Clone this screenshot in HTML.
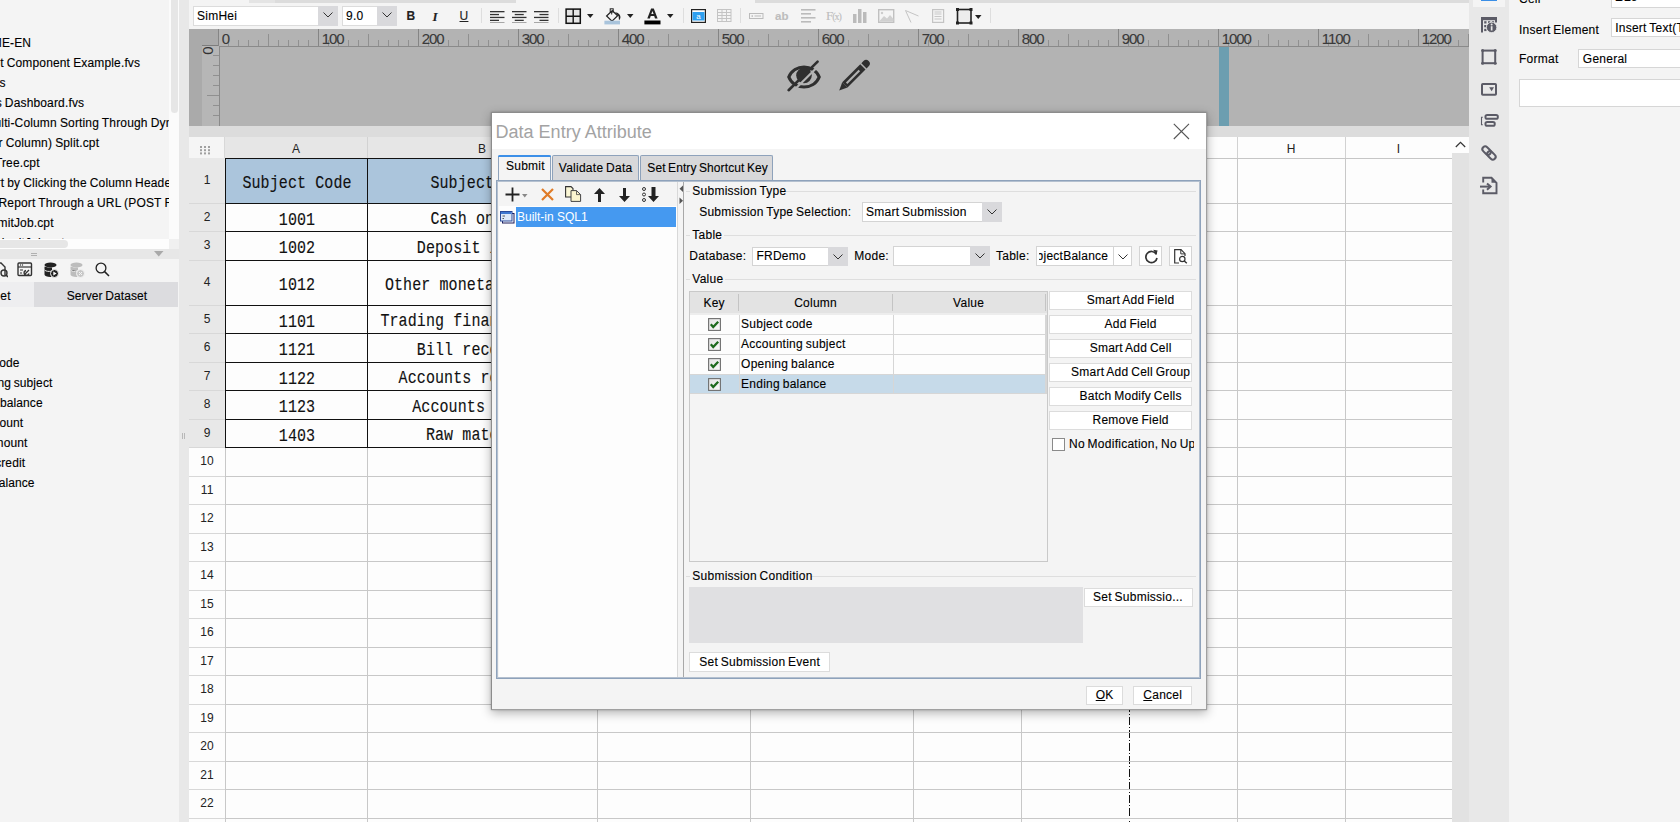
<!DOCTYPE html><html><head><meta charset="utf-8"><style>
html,body{margin:0;padding:0}
body{width:1680px;height:822px;overflow:hidden;position:relative;background:#f4f4f4;font-family:"Liberation Sans",sans-serif}
div,svg{position:absolute}
.t{white-space:nowrap;-webkit-text-stroke:0.12px currentColor}
</style></head><body>
<div style="left:0px;top:0px;width:179px;height:822px;background:#f4f4f4"></div><div style="left:0;top:0;width:169px;height:239px;overflow:hidden"><div class="t" style="left:-8.27px;top:36.84px;font-size:12px;line-height:12px;color:#000;font-family:'Liberation Sans', sans-serif;letter-spacing:0.15px;word-spacing:-0.4px;">ME-EN</div><div class="t" style="left:0.14px;top:56.84px;font-size:12px;line-height:12px;color:#000;font-family:'Liberation Sans', sans-serif;letter-spacing:0.15px;word-spacing:-0.4px;">t Component Example.fvs</div><div class="t" style="left:-0.50px;top:76.84px;font-size:12px;line-height:12px;color:#000;font-family:'Liberation Sans', sans-serif;letter-spacing:0.15px;word-spacing:-0.4px;">s</div><div class="t" style="left:-4.39px;top:96.84px;font-size:12px;line-height:12px;color:#000;font-family:'Liberation Sans', sans-serif;letter-spacing:0.15px;word-spacing:-0.4px;">s Dashboard.fvs</div><div class="t" style="left:-5.50px;top:116.84px;font-size:12px;line-height:12px;color:#000;font-family:'Liberation Sans', sans-serif;letter-spacing:0.15px;word-spacing:-0.4px;">ulti-Column Sorting Through Dynamic</div><div class="t" style="left:-1.59px;top:136.84px;font-size:12px;line-height:12px;color:#000;font-family:'Liberation Sans', sans-serif;letter-spacing:0.15px;word-spacing:-0.4px;">r Column) Split.cpt</div><div class="t" style="left:-5.11px;top:156.84px;font-size:12px;line-height:12px;color:#000;font-family:'Liberation Sans', sans-serif;letter-spacing:0.15px;word-spacing:-0.4px;">Tree.cpt</div><div class="t" style="left:-3.50px;top:176.84px;font-size:12px;line-height:12px;color:#000;font-family:'Liberation Sans', sans-serif;letter-spacing:0.15px;word-spacing:-0.4px;">rt by Clicking the Column Header</div><div class="t" style="left:-1.50px;top:196.84px;font-size:12px;line-height:12px;color:#000;font-family:'Liberation Sans', sans-serif;letter-spacing:0.15px;word-spacing:-0.4px;">Report Through a URL (POST Request)</div><div class="t" style="left:-2.52px;top:216.84px;font-size:12px;line-height:12px;color:#000;font-family:'Liberation Sans', sans-serif;letter-spacing:0.15px;word-spacing:-0.4px;">mitJob.cpt</div><div class="t" style="left:-5.00px;top:236.84px;font-size:12px;line-height:12px;color:#000;font-family:'Liberation Sans', sans-serif;letter-spacing:0.15px;word-spacing:-0.4px;">ubmitJob.cpt</div></div><div style="left:169px;top:0px;width:10px;height:239px;background:#fbfbfb"></div><div style="left:170.5px;top:0px;width:7.5px;height:112.5px;background:#e6e6e6;border-radius:0 0 4px 4px"></div><div style="left:0px;top:239px;width:169px;height:10px;background:#fdfdfd"></div><div style="left:-4px;top:240px;width:72px;height:8px;background:#e6e6e6;border-radius:4px"></div><div style="left:169px;top:239px;width:10px;height:10px;background:#f0f0f0"></div><div style="left:0px;top:249px;width:179px;height:10px;background:#e7e7e7"></div><div style="left:31px;top:253px;width:6px;height:1px;background:#b0b0b0"></div><div style="left:31px;top:255px;width:6px;height:1px;background:#b0b0b0"></div><svg style="left:154px;top:251px" width="10" height="6"><path d="M0 0H9.5L4.75 5.5Z" fill="#a9a9a9"/></svg><svg style="left:-8px;top:262px" width="16" height="16" viewBox="0 0 16 16"><path d="M2 1H9L13 5V13" fill="none" stroke="#333" stroke-width="1.4"/><circle cx="12" cy="11" r="3" fill="none" stroke="#333" stroke-width="1.4"/><path d="M14 13L16 15" stroke="#333" stroke-width="1.6"/></svg><svg style="left:17px;top:262px" width="16" height="15" viewBox="0 0 16 15"><rect x="1" y="1" width="13.5" height="12.5" rx="1" fill="none" stroke="#333" stroke-width="1.4"/><path d="M1 5H14.5" stroke="#333" stroke-width="1.2"/><circle cx="3.5" cy="3" r=".7" fill="#333"/><circle cx="5.5" cy="3" r=".7" fill="#333"/><path d="M3 8H6M3 11H5" stroke="#333" stroke-width="1.2"/><path d="M8 12L12 8M9 8.5A2.5 2.5 0 1 0 12 11.5" fill="none" stroke="#333" stroke-width="1.3"/></svg><svg style="left:44px;top:262px" width="15" height="16" viewBox="0 0 15 16"><ellipse cx="6.5" cy="3" rx="6" ry="2.6" fill="#222"/><path d="M0.5 4.5V12.5C0.5 14 3 15 6.5 15C7 15 7.5 15 8 14.9V5.5C7.5 5.6 7 5.6 6.5 5.6C3 5.6 0.5 4.6 0.5 4.5Z" fill="#222"/><path d="M0.5 8C2 9.5 5 9.5 7.5 9.3" stroke="#f4f4f4" stroke-width="1"/><circle cx="10.5" cy="11.5" r="4" fill="#222" stroke="#f4f4f4" stroke-width="1"/><path d="M9.3 9.5V13.5L12.6 11.5Z" fill="#fff"/></svg><svg style="left:69.5px;top:262px" width="15" height="16" viewBox="0 0 15 16"><ellipse cx="6.5" cy="3" rx="6" ry="2.6" fill="#bdbdbd"/><path d="M0.5 4.5V12.5C0.5 14 3 15 6.5 15C7 15 7.5 15 8 14.9V5.5C7.5 5.6 7 5.6 6.5 5.6C3 5.6 0.5 4.6 0.5 4.5Z" fill="#bdbdbd"/><path d="M0.5 8C2 9.5 5 9.5 7.5 9.3" stroke="#f4f4f4" stroke-width="1"/><circle cx="10.5" cy="11.5" r="4" fill="#c8c8c8" stroke="#f4f4f4" stroke-width="1"/><path d="M9 10L12 13M12 10L9 13" stroke="#f4f4f4" stroke-width="1"/></svg><svg style="left:94.5px;top:262px" width="15" height="15" viewBox="0 0 15 15"><circle cx="6" cy="6" r="4.9" fill="none" stroke="#222" stroke-width="1.3"/><path d="M9.6 9.6L14 14" stroke="#222" stroke-width="1.5"/></svg><div style="left:0px;top:281.5px;width:34px;height:25.5px;background:#eeeef0"></div><div style="left:34px;top:281.5px;width:144px;height:25.5px;background:#dcdcdf"></div><div class="t" style="left:0.25px;top:289.84px;font-size:12px;line-height:12px;color:#000;font-family:'Liberation Sans', sans-serif;letter-spacing:0.25px;word-spacing:-0.8px;">et</div><div class="t" style="left:66.82px;top:289.84px;font-size:12px;line-height:12px;color:#000;font-family:'Liberation Sans', sans-serif;letter-spacing:0.05px;word-spacing:-0.5px;">Server Dataset</div><div class="t" style="left:-0.72px;top:356.84px;font-size:12px;line-height:12px;color:#000;font-family:'Liberation Sans', sans-serif;letter-spacing:0.1px;word-spacing:-0.8px;">ode</div><div class="t" style="left:-2.49px;top:376.84px;font-size:12px;line-height:12px;color:#000;font-family:'Liberation Sans', sans-serif;letter-spacing:0.1px;word-spacing:-0.8px;">ng subject</div><div class="t" style="left:-0.03px;top:396.84px;font-size:12px;line-height:12px;color:#000;font-family:'Liberation Sans', sans-serif;letter-spacing:0.1px;word-spacing:-0.8px;">balance</div><div class="t" style="left:-0.64px;top:416.84px;font-size:12px;line-height:12px;color:#000;font-family:'Liberation Sans', sans-serif;letter-spacing:0.1px;word-spacing:-0.8px;">ount</div><div class="t" style="left:-6.44px;top:436.84px;font-size:12px;line-height:12px;color:#000;font-family:'Liberation Sans', sans-serif;letter-spacing:0.1px;word-spacing:-0.8px;">mount</div><div class="t" style="left:-4.84px;top:456.84px;font-size:12px;line-height:12px;color:#000;font-family:'Liberation Sans', sans-serif;letter-spacing:0.1px;word-spacing:-0.8px;">credit</div><div class="t" style="left:-1.36px;top:476.84px;font-size:12px;line-height:12px;color:#000;font-family:'Liberation Sans', sans-serif;letter-spacing:0.1px;word-spacing:-0.8px;">alance</div><div style="left:179px;top:0px;width:10px;height:822px;background:#e8e8e8"></div><div style="left:182px;top:432.5px;width:1px;height:6px;background:#b8b8b8"></div><div style="left:184px;top:432.5px;width:1px;height:6px;background:#b8b8b8"></div><div style="left:189px;top:0px;width:1280px;height:29px;background:#f4f4f4"></div><div style="left:249px;top:0px;width:26px;height:2.6px;background:#e4e4e4"></div><div style="left:275px;top:0px;width:241px;height:2.6px;background:#dcdcdc"></div><div style="left:755px;top:0px;width:714px;height:2.6px;background:#dcdcdc"></div><div style="left:193px;top:6px;width:145px;height:20px;background:#fff;border:1px solid #dcdcdc;box-sizing:border-box"></div><div style="left:318px;top:6px;width:20px;height:20px;background:#d9d9dc"></div><div class="t" style="left:197.00px;top:10.04px;font-size:12px;line-height:12px;color:#000;font-family:'Liberation Sans', sans-serif;letter-spacing:0.25px;word-spacing:-0.8px;">SimHei</div><svg style="left:323px;top:12px" width="10" height="6"><path d="M0.5 0.5L5 5L9.5 0.5" fill="none" stroke="#333" stroke-width="1"/></svg><div style="left:342px;top:6px;width:55px;height:20px;background:#fff;border:1px solid #dcdcdc;box-sizing:border-box"></div><div style="left:377px;top:6px;width:20px;height:20px;background:#d9d9dc"></div><div class="t" style="left:346.00px;top:10.04px;font-size:12px;line-height:12px;color:#000;font-family:'Liberation Sans', sans-serif;letter-spacing:0.25px;word-spacing:-0.8px;">9.0</div><svg style="left:382px;top:12px" width="10" height="6"><path d="M0.5 0.5L5 5L9.5 0.5" fill="none" stroke="#333" stroke-width="1"/></svg><div class="t" style="left:406.50px;top:10.34px;font-size:12px;line-height:12px;color:#222;font-family:'Liberation Sans', sans-serif;letter-spacing:0.25px;word-spacing:-0.8px;font-weight:bold">B</div><div class="t" style="left:432.50px;top:9.50px;font-size:13px;line-height:13px;color:#222;font-family:'Liberation Sans', sans-serif;letter-spacing:0px;word-spacing:0px;font-style:italic;font-family:'Liberation Serif',serif;font-weight:bold">I</div><div class="t" style="left:459.50px;top:10.34px;font-size:12px;line-height:12px;color:#222;font-family:'Liberation Sans', sans-serif;letter-spacing:0.25px;word-spacing:-0.8px;text-decoration:underline">U</div><div style="left:480.5px;top:8px;width:1px;height:15px;background:#dedede"></div><div style="left:558px;top:8px;width:1px;height:15px;background:#dedede"></div><div style="left:682.5px;top:8px;width:1px;height:15px;background:#dedede"></div><div style="left:740px;top:8px;width:1px;height:15px;background:#dedede"></div><div style="left:990px;top:8px;width:1px;height:15px;background:#dedede"></div><svg style="left:489.5px;top:10px" width="16" height="13"><rect x="0" y="1.0" width="14.5" height="1.3" fill="#333"/><rect x="0" y="3.9" width="9" height="1.3" fill="#333"/><rect x="0" y="6.8" width="14.5" height="1.3" fill="#333"/><rect x="0" y="9.7" width="9" height="1.3" fill="#333"/><rect x="0" y="12.6" width="14.5" height="1.3" fill="#333"/></svg><svg style="left:511.5px;top:10px" width="16" height="13"><rect x="0" y="1.0" width="14.5" height="1.3" fill="#333"/><rect x="2.75" y="3.9" width="9.0" height="1.3" fill="#333"/><rect x="0" y="6.8" width="14.5" height="1.3" fill="#333"/><rect x="2.75" y="9.7" width="9.0" height="1.3" fill="#333"/><rect x="0" y="12.6" width="14.5" height="1.3" fill="#333"/></svg><svg style="left:533.5px;top:10px" width="16" height="13"><rect x="0" y="1.0" width="14.5" height="1.3" fill="#333"/><rect x="5.5" y="3.9" width="9.0" height="1.3" fill="#333"/><rect x="0" y="6.8" width="14.5" height="1.3" fill="#333"/><rect x="5.5" y="9.7" width="9.0" height="1.3" fill="#333"/><rect x="0" y="12.6" width="14.5" height="1.3" fill="#333"/></svg><svg style="left:564.5px;top:7.5px" width="17" height="17"><rect x="1.1" y="1.1" width="14.2" height="14.2" fill="#e4e4e4" stroke="#111" stroke-width="1.5"/><path d="M8.2 1V15.4M1 8.2H15.4" stroke="#111" stroke-width="1.4"/></svg><svg style="left:587px;top:14px" width="7" height="5"><path d="M0 0H6.5L3.25 4Z" fill="#222"/></svg><svg style="left:627px;top:14px" width="7" height="5"><path d="M0 0H6.5L3.25 4Z" fill="#222"/></svg><svg style="left:666.5px;top:14px" width="7" height="5"><path d="M0 0H6.5L3.25 4Z" fill="#222"/></svg><svg style="left:975px;top:14.5px" width="7" height="5"><path d="M0 0H6.5L3.25 4Z" fill="#222"/></svg><svg style="left:603.5px;top:7.5px" width="17" height="17"><rect x="6.2" y="0.8" width="3" height="3.2" fill="none" stroke="#222" stroke-width="1"/><path d="M7.7 3V6.5" stroke="#222" stroke-width="1"/><path d="M2.6 8L8.3 2.6L13.6 7.8L8 13.2Z" fill="none" stroke="#222" stroke-width="1.2"/><path d="M11 4.2C14.5 4.5 16.8 7 16.4 9.8C16.2 11 15.6 11.8 15 12.2L14.6 8.2Z" fill="#222"/><rect x="0.4" y="12.7" width="15.6" height="3.7" fill="#a9c4dc"/></svg><svg style="left:643.5px;top:7.5px" width="17" height="17"><path d="M3.3 10.4L7.1 0.4H9.8L13.6 10.4H11L10.2 8.1H6.7L5.9 10.4ZM7.3 6.1H9.6L8.45 3Z" fill="#222" fill-rule="evenodd"/><rect x="0.4" y="12.5" width="16.1" height="3.9" fill="#000"/></svg><svg style="left:690.5px;top:8.5px" width="15" height="14"><rect x="0.6" y="0.6" width="13.8" height="12.8" fill="#fff" stroke="#222" stroke-width="1.2"/><rect x="1.5" y="3" width="12" height="8.5" fill="#2ea0f0"/><text x="7.5" y="10" font-size="8" fill="#fff" text-anchor="middle" font-family="Liberation Sans">a</text></svg><svg style="left:717px;top:9px" width="15" height="13"><rect x="0.5" y="0.5" width="13.5" height="12" fill="none" stroke="#c4c4c4"/><path d="M0.5 3.5H14M0.5 6.5H14M0.5 9.5H14M5 0.5V12.5M9.5 0.5V12.5" stroke="#c4c4c4"/></svg><svg style="left:748.5px;top:12.5px" width="15" height="6"><rect x="0.5" y="0.5" width="13.5" height="5" fill="none" stroke="#bbb"/><rect x="2.5" y="2.3" width="1.5" height="1.5" fill="#bbb"/><path d="M5.5 3H12" stroke="#bbb"/></svg><div class="t" style="left:775px;top:10px;font-size:11.5px;line-height:12px;font-weight:bold;color:#bdbdbd;font-family:'Liberation Sans',sans-serif">ab</div><svg style="left:800.5px;top:9px" width="15" height="14"><rect x="0" y="0" width="14.5" height="1.6" fill="#bbb"/><rect x="0" y="4" width="10" height="1.6" fill="#bbb"/><rect x="0" y="8" width="14.5" height="1.6" fill="#bbb"/><rect x="0" y="12" width="10" height="1.6" fill="#bbb"/></svg><div class="t" style="left:826px;top:9px;font-size:13px;line-height:13px;color:#bdbdbd;font-family:'Liberation Serif',serif;letter-spacing:-1px">F<span style="font-size:10px">(x)</span></div><svg style="left:853px;top:9px" width="15" height="14"><rect x="0" y="5" width="3.5" height="9" fill="#bbb"/><rect x="5" y="0" width="3.5" height="14" fill="#bbb"/><rect x="10" y="3" width="3.5" height="11" fill="#bbb"/></svg><svg style="left:878px;top:9px" width="17" height="14"><rect x="0.7" y="0.7" width="15" height="12.6" fill="none" stroke="#c0c0c0" stroke-width="1.4"/><path d="M1.5 12L6 7L9 9.5L12 6L15.5 10V12.5H1.5Z" fill="#d0d0d0"/><circle cx="4" cy="4" r="1.2" fill="#ccc"/></svg><svg style="left:905px;top:9.5px" width="14" height="13"><path d="M0.5 0.5L6 12.5M0.5 0.5L13.5 6" stroke="#c4c4c4" stroke-width="1"/></svg><svg style="left:932px;top:9px" width="13" height="14"><rect x="0.6" y="0.6" width="11" height="12.8" fill="none" stroke="#c4c4c4" stroke-width="1.2"/><path d="M2.5 3H9.5M2.5 5H9.5M2.5 7.5H9.5M2.5 10H9.5" stroke="#c8c8c8"/></svg><svg style="left:955.5px;top:7.5px" width="17" height="17"><rect x="1.5" y="1.5" width="13.5" height="13.5" fill="#ededed" stroke="#222" stroke-width="1.6"/><rect x="0" y="0" width="3" height="3" fill="#222"/><rect x="13.5" y="0" width="3" height="3" fill="#222"/><rect x="0" y="13.5" width="3" height="3" fill="#222"/><rect x="13.5" y="13.5" width="3" height="3" fill="#222"/></svg><div style="left:189px;top:29px;width:1280px;height:96.5px;background:#b3b3b3"></div><div style="left:189px;top:29px;width:13px;height:96.5px;background:#aaaaaa"></div><div style="left:189px;top:29px;width:29px;height:16.5px;background:#aaaaaa"></div><div style="left:202px;top:45px;width:16.5px;height:80.5px;background:#b6b6b6"></div><div style="left:202px;top:45px;width:17px;height:1.2px;background:#7d7d7d"></div><div style="left:218px;top:29px;width:1.2px;height:17px;background:#7d7d7d"></div><div style="left:218.5px;top:45.5px;width:1251px;height:1.3px;background:#8a8a8a"></div><div style="left:218.5px;top:45.5px;width:1.3px;height:80px;background:#8a8a8a"></div><svg style="left:0;top:29px" width="1469" height="17"><path d="M218.5 0V17" stroke="#858585" stroke-width="1"/><path d="M228.5 11V17" stroke="#909090" stroke-width="1"/><path d="M238.5 11V17" stroke="#909090" stroke-width="1"/><path d="M248.5 11V17" stroke="#909090" stroke-width="1"/><path d="M258.5 11V17" stroke="#909090" stroke-width="1"/><path d="M268.5 5V17" stroke="#909090" stroke-width="1"/><path d="M278.5 11V17" stroke="#909090" stroke-width="1"/><path d="M288.5 11V17" stroke="#909090" stroke-width="1"/><path d="M298.5 11V17" stroke="#909090" stroke-width="1"/><path d="M308.5 11V17" stroke="#909090" stroke-width="1"/><path d="M318.5 0V17" stroke="#858585" stroke-width="1"/><path d="M328.5 11V17" stroke="#909090" stroke-width="1"/><path d="M338.5 11V17" stroke="#909090" stroke-width="1"/><path d="M348.5 11V17" stroke="#909090" stroke-width="1"/><path d="M358.5 11V17" stroke="#909090" stroke-width="1"/><path d="M368.5 5V17" stroke="#909090" stroke-width="1"/><path d="M378.5 11V17" stroke="#909090" stroke-width="1"/><path d="M388.5 11V17" stroke="#909090" stroke-width="1"/><path d="M398.5 11V17" stroke="#909090" stroke-width="1"/><path d="M408.5 11V17" stroke="#909090" stroke-width="1"/><path d="M418.5 0V17" stroke="#858585" stroke-width="1"/><path d="M428.5 11V17" stroke="#909090" stroke-width="1"/><path d="M438.5 11V17" stroke="#909090" stroke-width="1"/><path d="M448.5 11V17" stroke="#909090" stroke-width="1"/><path d="M458.5 11V17" stroke="#909090" stroke-width="1"/><path d="M468.5 5V17" stroke="#909090" stroke-width="1"/><path d="M478.5 11V17" stroke="#909090" stroke-width="1"/><path d="M488.5 11V17" stroke="#909090" stroke-width="1"/><path d="M498.5 11V17" stroke="#909090" stroke-width="1"/><path d="M508.5 11V17" stroke="#909090" stroke-width="1"/><path d="M518.5 0V17" stroke="#858585" stroke-width="1"/><path d="M528.5 11V17" stroke="#909090" stroke-width="1"/><path d="M538.5 11V17" stroke="#909090" stroke-width="1"/><path d="M548.5 11V17" stroke="#909090" stroke-width="1"/><path d="M558.5 11V17" stroke="#909090" stroke-width="1"/><path d="M568.5 5V17" stroke="#909090" stroke-width="1"/><path d="M578.5 11V17" stroke="#909090" stroke-width="1"/><path d="M588.5 11V17" stroke="#909090" stroke-width="1"/><path d="M598.5 11V17" stroke="#909090" stroke-width="1"/><path d="M608.5 11V17" stroke="#909090" stroke-width="1"/><path d="M618.5 0V17" stroke="#858585" stroke-width="1"/><path d="M628.5 11V17" stroke="#909090" stroke-width="1"/><path d="M638.5 11V17" stroke="#909090" stroke-width="1"/><path d="M648.5 11V17" stroke="#909090" stroke-width="1"/><path d="M658.5 11V17" stroke="#909090" stroke-width="1"/><path d="M668.5 5V17" stroke="#909090" stroke-width="1"/><path d="M678.5 11V17" stroke="#909090" stroke-width="1"/><path d="M688.5 11V17" stroke="#909090" stroke-width="1"/><path d="M698.5 11V17" stroke="#909090" stroke-width="1"/><path d="M708.5 11V17" stroke="#909090" stroke-width="1"/><path d="M718.5 0V17" stroke="#858585" stroke-width="1"/><path d="M728.5 11V17" stroke="#909090" stroke-width="1"/><path d="M738.5 11V17" stroke="#909090" stroke-width="1"/><path d="M748.5 11V17" stroke="#909090" stroke-width="1"/><path d="M758.5 11V17" stroke="#909090" stroke-width="1"/><path d="M768.5 5V17" stroke="#909090" stroke-width="1"/><path d="M778.5 11V17" stroke="#909090" stroke-width="1"/><path d="M788.5 11V17" stroke="#909090" stroke-width="1"/><path d="M798.5 11V17" stroke="#909090" stroke-width="1"/><path d="M808.5 11V17" stroke="#909090" stroke-width="1"/><path d="M818.5 0V17" stroke="#858585" stroke-width="1"/><path d="M828.5 11V17" stroke="#909090" stroke-width="1"/><path d="M838.5 11V17" stroke="#909090" stroke-width="1"/><path d="M848.5 11V17" stroke="#909090" stroke-width="1"/><path d="M858.5 11V17" stroke="#909090" stroke-width="1"/><path d="M868.5 5V17" stroke="#909090" stroke-width="1"/><path d="M878.5 11V17" stroke="#909090" stroke-width="1"/><path d="M888.5 11V17" stroke="#909090" stroke-width="1"/><path d="M898.5 11V17" stroke="#909090" stroke-width="1"/><path d="M908.5 11V17" stroke="#909090" stroke-width="1"/><path d="M918.5 0V17" stroke="#858585" stroke-width="1"/><path d="M928.5 11V17" stroke="#909090" stroke-width="1"/><path d="M938.5 11V17" stroke="#909090" stroke-width="1"/><path d="M948.5 11V17" stroke="#909090" stroke-width="1"/><path d="M958.5 11V17" stroke="#909090" stroke-width="1"/><path d="M968.5 5V17" stroke="#909090" stroke-width="1"/><path d="M978.5 11V17" stroke="#909090" stroke-width="1"/><path d="M988.5 11V17" stroke="#909090" stroke-width="1"/><path d="M998.5 11V17" stroke="#909090" stroke-width="1"/><path d="M1008.5 11V17" stroke="#909090" stroke-width="1"/><path d="M1018.5 0V17" stroke="#858585" stroke-width="1"/><path d="M1028.5 11V17" stroke="#909090" stroke-width="1"/><path d="M1038.5 11V17" stroke="#909090" stroke-width="1"/><path d="M1048.5 11V17" stroke="#909090" stroke-width="1"/><path d="M1058.5 11V17" stroke="#909090" stroke-width="1"/><path d="M1068.5 5V17" stroke="#909090" stroke-width="1"/><path d="M1078.5 11V17" stroke="#909090" stroke-width="1"/><path d="M1088.5 11V17" stroke="#909090" stroke-width="1"/><path d="M1098.5 11V17" stroke="#909090" stroke-width="1"/><path d="M1108.5 11V17" stroke="#909090" stroke-width="1"/><path d="M1118.5 0V17" stroke="#858585" stroke-width="1"/><path d="M1128.5 11V17" stroke="#909090" stroke-width="1"/><path d="M1138.5 11V17" stroke="#909090" stroke-width="1"/><path d="M1148.5 11V17" stroke="#909090" stroke-width="1"/><path d="M1158.5 11V17" stroke="#909090" stroke-width="1"/><path d="M1168.5 5V17" stroke="#909090" stroke-width="1"/><path d="M1178.5 11V17" stroke="#909090" stroke-width="1"/><path d="M1188.5 11V17" stroke="#909090" stroke-width="1"/><path d="M1198.5 11V17" stroke="#909090" stroke-width="1"/><path d="M1208.5 11V17" stroke="#909090" stroke-width="1"/><path d="M1218.5 0V17" stroke="#858585" stroke-width="1"/><path d="M1228.5 11V17" stroke="#909090" stroke-width="1"/><path d="M1238.5 11V17" stroke="#909090" stroke-width="1"/><path d="M1248.5 11V17" stroke="#909090" stroke-width="1"/><path d="M1258.5 11V17" stroke="#909090" stroke-width="1"/><path d="M1268.5 5V17" stroke="#909090" stroke-width="1"/><path d="M1278.5 11V17" stroke="#909090" stroke-width="1"/><path d="M1288.5 11V17" stroke="#909090" stroke-width="1"/><path d="M1298.5 11V17" stroke="#909090" stroke-width="1"/><path d="M1308.5 11V17" stroke="#909090" stroke-width="1"/><path d="M1318.5 0V17" stroke="#858585" stroke-width="1"/><path d="M1328.5 11V17" stroke="#909090" stroke-width="1"/><path d="M1338.5 11V17" stroke="#909090" stroke-width="1"/><path d="M1348.5 11V17" stroke="#909090" stroke-width="1"/><path d="M1358.5 11V17" stroke="#909090" stroke-width="1"/><path d="M1368.5 5V17" stroke="#909090" stroke-width="1"/><path d="M1378.5 11V17" stroke="#909090" stroke-width="1"/><path d="M1388.5 11V17" stroke="#909090" stroke-width="1"/><path d="M1398.5 11V17" stroke="#909090" stroke-width="1"/><path d="M1408.5 11V17" stroke="#909090" stroke-width="1"/><path d="M1418.5 0V17" stroke="#858585" stroke-width="1"/><path d="M1428.5 11V17" stroke="#909090" stroke-width="1"/><path d="M1438.5 11V17" stroke="#909090" stroke-width="1"/><path d="M1448.5 11V17" stroke="#909090" stroke-width="1"/><path d="M1458.5 11V17" stroke="#909090" stroke-width="1"/><path d="M1468.5 5V17" stroke="#909090" stroke-width="1"/></svg><div class="t" style="left:221.80px;top:31.30px;font-size:15px;line-height:15px;color:#3a3a3a;font-family:'Liberation Sans', sans-serif;letter-spacing:0px;word-spacing:0px;letter-spacing:-1.1px">0</div><div class="t" style="left:321.80px;top:31.30px;font-size:15px;line-height:15px;color:#3a3a3a;font-family:'Liberation Sans', sans-serif;letter-spacing:0px;word-spacing:0px;letter-spacing:-1.1px">100</div><div class="t" style="left:421.80px;top:31.30px;font-size:15px;line-height:15px;color:#3a3a3a;font-family:'Liberation Sans', sans-serif;letter-spacing:0px;word-spacing:0px;letter-spacing:-1.1px">200</div><div class="t" style="left:521.80px;top:31.30px;font-size:15px;line-height:15px;color:#3a3a3a;font-family:'Liberation Sans', sans-serif;letter-spacing:0px;word-spacing:0px;letter-spacing:-1.1px">300</div><div class="t" style="left:621.80px;top:31.30px;font-size:15px;line-height:15px;color:#3a3a3a;font-family:'Liberation Sans', sans-serif;letter-spacing:0px;word-spacing:0px;letter-spacing:-1.1px">400</div><div class="t" style="left:721.80px;top:31.30px;font-size:15px;line-height:15px;color:#3a3a3a;font-family:'Liberation Sans', sans-serif;letter-spacing:0px;word-spacing:0px;letter-spacing:-1.1px">500</div><div class="t" style="left:821.80px;top:31.30px;font-size:15px;line-height:15px;color:#3a3a3a;font-family:'Liberation Sans', sans-serif;letter-spacing:0px;word-spacing:0px;letter-spacing:-1.1px">600</div><div class="t" style="left:921.80px;top:31.30px;font-size:15px;line-height:15px;color:#3a3a3a;font-family:'Liberation Sans', sans-serif;letter-spacing:0px;word-spacing:0px;letter-spacing:-1.1px">700</div><div class="t" style="left:1021.80px;top:31.30px;font-size:15px;line-height:15px;color:#3a3a3a;font-family:'Liberation Sans', sans-serif;letter-spacing:0px;word-spacing:0px;letter-spacing:-1.1px">800</div><div class="t" style="left:1121.80px;top:31.30px;font-size:15px;line-height:15px;color:#3a3a3a;font-family:'Liberation Sans', sans-serif;letter-spacing:0px;word-spacing:0px;letter-spacing:-1.1px">900</div><div class="t" style="left:1221.80px;top:31.30px;font-size:15px;line-height:15px;color:#3a3a3a;font-family:'Liberation Sans', sans-serif;letter-spacing:0px;word-spacing:0px;letter-spacing:-1.1px">1000</div><div class="t" style="left:1321.80px;top:31.30px;font-size:15px;line-height:15px;color:#3a3a3a;font-family:'Liberation Sans', sans-serif;letter-spacing:0px;word-spacing:0px;letter-spacing:-1.1px">1100</div><div class="t" style="left:1421.80px;top:31.30px;font-size:15px;line-height:15px;color:#3a3a3a;font-family:'Liberation Sans', sans-serif;letter-spacing:0px;word-spacing:0px;letter-spacing:-1.1px">1200</div><svg style="left:202px;top:45px" width="17" height="81"><path d="M11 10.5H17" stroke="#909090"/><path d="M11 20.5H17" stroke="#909090"/><path d="M11 30.5H17" stroke="#909090"/><path d="M11 40.5H17" stroke="#909090"/><path d="M5 50.5H17" stroke="#909090"/><path d="M11 60.5H17" stroke="#909090"/><path d="M11 70.5H17" stroke="#909090"/></svg><div class="t" style="left:199px;top:43px;width:16px;height:15px;font-size:15px;line-height:15px;color:#333;font-family:'Liberation Sans',sans-serif;transform:rotate(-90deg);transform-origin:8px 7.5px;text-align:center;-webkit-text-stroke:0">0</div><div style="left:1219px;top:46.5px;width:10px;height:79px;background:#6c9eb0"></div><svg style="left:780px;top:55px" width="100" height="42" viewBox="0 0 100 42"><path d="M8.8 22 C14 8.7 34 8.7 39.2 22 C34 35.3 14 35.3 8.8 22 Z" fill="none" stroke="#2f2f2f" stroke-width="3.2"/><circle cx="24" cy="20.5" r="7.8" fill="#2f2f2f"/><path d="M40.2 9.2L11.2 38" stroke="#b3b3b3" stroke-width="2.2"/><path d="M37.6 6.6L8.6 35.2" stroke="#2f2f2f" stroke-width="2.6" stroke-linecap="round"/><g transform="translate(59.2 35.6) rotate(-45)"><path d="M0 0L8 -3.7V3.7Z" fill="#2f2f2f"/><rect x="8" y="-3.7" width="25.5" height="7.4" fill="#2f2f2f"/><rect x="10.5" y="-1" width="18" height="2" fill="#b3b3b3"/><path d="M35 -3.7H38A3.7 3.7 0 0 1 38 3.7H35Z" fill="#2f2f2f"/></g></svg><div style="left:189px;top:125.5px;width:1280px;height:11.5px;background:#dcdcdc"></div><div style="left:189px;top:137px;width:1263px;height:685px;background:#fdfdfd"></div><div style="left:225px;top:137px;width:372px;height:21px;background:#e6e6e6"></div><div style="left:189px;top:137px;width:36px;height:21px;background:#f5f5f5;border-right:1px solid #d8d8d8;box-sizing:border-box"></div><div style="left:189px;top:158px;width:36px;height:289px;background:#e8e8e8"></div><svg style="left:200px;top:146px" width="11" height="9"><rect x="0" y="0.0" width="2" height="2" fill="#a0a0a0"/><rect x="0" y="3.2" width="2" height="2" fill="#a0a0a0"/><rect x="0" y="6.4" width="2" height="2" fill="#a0a0a0"/><rect x="4" y="0.0" width="2" height="2" fill="#a0a0a0"/><rect x="4" y="3.2" width="2" height="2" fill="#a0a0a0"/><rect x="4" y="6.4" width="2" height="2" fill="#a0a0a0"/><rect x="8" y="0.0" width="2" height="2" fill="#a0a0a0"/><rect x="8" y="3.2" width="2" height="2" fill="#a0a0a0"/><rect x="8" y="6.4" width="2" height="2" fill="#a0a0a0"/></svg><div style="left:367px;top:137px;width:1px;height:21px;background:#d2d2d2"></div><div style="left:597px;top:137px;width:1px;height:21px;background:#d2d2d2"></div><div style="left:750px;top:137px;width:1px;height:21px;background:#d2d2d2"></div><div style="left:913px;top:137px;width:1px;height:21px;background:#d2d2d2"></div><div style="left:1021px;top:137px;width:1px;height:21px;background:#d2d2d2"></div><div style="left:1237px;top:137px;width:1px;height:21px;background:#d2d2d2"></div><div style="left:1345px;top:137px;width:1px;height:21px;background:#d2d2d2"></div><div style="left:1452px;top:137px;width:1px;height:21px;background:#d2d2d2"></div><div style="left:225px;top:157.5px;width:1227px;height:1px;background:#c6c6c6"></div><div style="left:225px;top:158px;width:1px;height:664px;background:#c8c8c8"></div><div style="left:367px;top:158px;width:1px;height:664px;background:#c8c8c8"></div><div style="left:597px;top:158px;width:1px;height:664px;background:#c8c8c8"></div><div style="left:750px;top:158px;width:1px;height:664px;background:#c8c8c8"></div><div style="left:913px;top:158px;width:1px;height:664px;background:#c8c8c8"></div><div style="left:1021px;top:158px;width:1px;height:664px;background:#c8c8c8"></div><div style="left:1237px;top:158px;width:1px;height:664px;background:#c8c8c8"></div><div style="left:1345px;top:158px;width:1px;height:664px;background:#c8c8c8"></div><div style="left:1452px;top:158px;width:1px;height:664px;background:#c8c8c8"></div><div style="left:1129px;top:158px;width:1.2px;height:664px;background:repeating-linear-gradient(#111 0 8px,transparent 8px 10px,#111 10px 11px,transparent 11px 13px)"></div><div style="left:225px;top:203px;width:1227px;height:1px;background:#c8c8c8"></div><div style="left:189px;top:203px;width:36px;height:1px;background:#d8d8d8"></div><div style="left:225px;top:231px;width:1227px;height:1px;background:#c8c8c8"></div><div style="left:189px;top:231px;width:36px;height:1px;background:#d8d8d8"></div><div style="left:225px;top:260px;width:1227px;height:1px;background:#c8c8c8"></div><div style="left:189px;top:260px;width:36px;height:1px;background:#d8d8d8"></div><div style="left:225px;top:305px;width:1227px;height:1px;background:#c8c8c8"></div><div style="left:189px;top:305px;width:36px;height:1px;background:#d8d8d8"></div><div style="left:225px;top:333px;width:1227px;height:1px;background:#c8c8c8"></div><div style="left:189px;top:333px;width:36px;height:1px;background:#d8d8d8"></div><div style="left:225px;top:362px;width:1227px;height:1px;background:#c8c8c8"></div><div style="left:189px;top:362px;width:36px;height:1px;background:#d8d8d8"></div><div style="left:225px;top:390px;width:1227px;height:1px;background:#c8c8c8"></div><div style="left:189px;top:390px;width:36px;height:1px;background:#d8d8d8"></div><div style="left:225px;top:419px;width:1227px;height:1px;background:#c8c8c8"></div><div style="left:189px;top:419px;width:36px;height:1px;background:#d8d8d8"></div><div style="left:225px;top:447px;width:1227px;height:1px;background:#c8c8c8"></div><div style="left:189px;top:447px;width:36px;height:1px;background:#d8d8d8"></div><div style="left:225px;top:476px;width:1227px;height:1px;background:#c8c8c8"></div><div style="left:189px;top:476px;width:36px;height:1px;background:#d8d8d8"></div><div style="left:225px;top:504px;width:1227px;height:1px;background:#c8c8c8"></div><div style="left:189px;top:504px;width:36px;height:1px;background:#d8d8d8"></div><div style="left:225px;top:533px;width:1227px;height:1px;background:#c8c8c8"></div><div style="left:189px;top:533px;width:36px;height:1px;background:#d8d8d8"></div><div style="left:225px;top:561px;width:1227px;height:1px;background:#c8c8c8"></div><div style="left:189px;top:561px;width:36px;height:1px;background:#d8d8d8"></div><div style="left:225px;top:590px;width:1227px;height:1px;background:#c8c8c8"></div><div style="left:189px;top:590px;width:36px;height:1px;background:#d8d8d8"></div><div style="left:225px;top:618px;width:1227px;height:1px;background:#c8c8c8"></div><div style="left:189px;top:618px;width:36px;height:1px;background:#d8d8d8"></div><div style="left:225px;top:647px;width:1227px;height:1px;background:#c8c8c8"></div><div style="left:189px;top:647px;width:36px;height:1px;background:#d8d8d8"></div><div style="left:225px;top:675px;width:1227px;height:1px;background:#c8c8c8"></div><div style="left:189px;top:675px;width:36px;height:1px;background:#d8d8d8"></div><div style="left:225px;top:704px;width:1227px;height:1px;background:#c8c8c8"></div><div style="left:189px;top:704px;width:36px;height:1px;background:#d8d8d8"></div><div style="left:225px;top:732px;width:1227px;height:1px;background:#c8c8c8"></div><div style="left:189px;top:732px;width:36px;height:1px;background:#d8d8d8"></div><div style="left:225px;top:761px;width:1227px;height:1px;background:#c8c8c8"></div><div style="left:189px;top:761px;width:36px;height:1px;background:#d8d8d8"></div><div style="left:225px;top:789px;width:1227px;height:1px;background:#c8c8c8"></div><div style="left:189px;top:789px;width:36px;height:1px;background:#d8d8d8"></div><div style="left:225px;top:818px;width:1227px;height:1px;background:#c8c8c8"></div><div style="left:189px;top:818px;width:36px;height:1px;background:#d8d8d8"></div><div class="t" style="left:203.66px;top:174.34px;font-size:12px;line-height:12px;color:#222;font-family:'Liberation Sans', sans-serif;letter-spacing:0.25px;word-spacing:-0.8px;-webkit-text-stroke:0">1</div><div class="t" style="left:203.66px;top:210.84px;font-size:12px;line-height:12px;color:#222;font-family:'Liberation Sans', sans-serif;letter-spacing:0.25px;word-spacing:-0.8px;-webkit-text-stroke:0">2</div><div class="t" style="left:203.66px;top:239.34px;font-size:12px;line-height:12px;color:#222;font-family:'Liberation Sans', sans-serif;letter-spacing:0.25px;word-spacing:-0.8px;-webkit-text-stroke:0">3</div><div class="t" style="left:203.66px;top:276.34px;font-size:12px;line-height:12px;color:#222;font-family:'Liberation Sans', sans-serif;letter-spacing:0.25px;word-spacing:-0.8px;-webkit-text-stroke:0">4</div><div class="t" style="left:203.66px;top:312.84px;font-size:12px;line-height:12px;color:#222;font-family:'Liberation Sans', sans-serif;letter-spacing:0.25px;word-spacing:-0.8px;-webkit-text-stroke:0">5</div><div class="t" style="left:203.66px;top:341.34px;font-size:12px;line-height:12px;color:#222;font-family:'Liberation Sans', sans-serif;letter-spacing:0.25px;word-spacing:-0.8px;-webkit-text-stroke:0">6</div><div class="t" style="left:203.66px;top:369.84px;font-size:12px;line-height:12px;color:#222;font-family:'Liberation Sans', sans-serif;letter-spacing:0.25px;word-spacing:-0.8px;-webkit-text-stroke:0">7</div><div class="t" style="left:203.66px;top:398.34px;font-size:12px;line-height:12px;color:#222;font-family:'Liberation Sans', sans-serif;letter-spacing:0.25px;word-spacing:-0.8px;-webkit-text-stroke:0">8</div><div class="t" style="left:203.66px;top:426.84px;font-size:12px;line-height:12px;color:#222;font-family:'Liberation Sans', sans-serif;letter-spacing:0.25px;word-spacing:-0.8px;-webkit-text-stroke:0">9</div><div class="t" style="left:200.20px;top:455.34px;font-size:12px;line-height:12px;color:#222;font-family:'Liberation Sans', sans-serif;letter-spacing:0.25px;word-spacing:-0.8px;-webkit-text-stroke:0">10</div><div class="t" style="left:200.65px;top:483.84px;font-size:12px;line-height:12px;color:#222;font-family:'Liberation Sans', sans-serif;letter-spacing:0.25px;word-spacing:-0.8px;-webkit-text-stroke:0">11</div><div class="t" style="left:200.20px;top:512.34px;font-size:12px;line-height:12px;color:#222;font-family:'Liberation Sans', sans-serif;letter-spacing:0.25px;word-spacing:-0.8px;-webkit-text-stroke:0">12</div><div class="t" style="left:200.20px;top:540.84px;font-size:12px;line-height:12px;color:#222;font-family:'Liberation Sans', sans-serif;letter-spacing:0.25px;word-spacing:-0.8px;-webkit-text-stroke:0">13</div><div class="t" style="left:200.20px;top:569.34px;font-size:12px;line-height:12px;color:#222;font-family:'Liberation Sans', sans-serif;letter-spacing:0.25px;word-spacing:-0.8px;-webkit-text-stroke:0">14</div><div class="t" style="left:200.20px;top:597.84px;font-size:12px;line-height:12px;color:#222;font-family:'Liberation Sans', sans-serif;letter-spacing:0.25px;word-spacing:-0.8px;-webkit-text-stroke:0">15</div><div class="t" style="left:200.20px;top:626.34px;font-size:12px;line-height:12px;color:#222;font-family:'Liberation Sans', sans-serif;letter-spacing:0.25px;word-spacing:-0.8px;-webkit-text-stroke:0">16</div><div class="t" style="left:200.20px;top:654.84px;font-size:12px;line-height:12px;color:#222;font-family:'Liberation Sans', sans-serif;letter-spacing:0.25px;word-spacing:-0.8px;-webkit-text-stroke:0">17</div><div class="t" style="left:200.20px;top:683.34px;font-size:12px;line-height:12px;color:#222;font-family:'Liberation Sans', sans-serif;letter-spacing:0.25px;word-spacing:-0.8px;-webkit-text-stroke:0">18</div><div class="t" style="left:200.20px;top:711.84px;font-size:12px;line-height:12px;color:#222;font-family:'Liberation Sans', sans-serif;letter-spacing:0.25px;word-spacing:-0.8px;-webkit-text-stroke:0">19</div><div class="t" style="left:200.20px;top:740.34px;font-size:12px;line-height:12px;color:#222;font-family:'Liberation Sans', sans-serif;letter-spacing:0.25px;word-spacing:-0.8px;-webkit-text-stroke:0">20</div><div class="t" style="left:200.20px;top:768.84px;font-size:12px;line-height:12px;color:#222;font-family:'Liberation Sans', sans-serif;letter-spacing:0.25px;word-spacing:-0.8px;-webkit-text-stroke:0">21</div><div class="t" style="left:200.20px;top:797.34px;font-size:12px;line-height:12px;color:#222;font-family:'Liberation Sans', sans-serif;letter-spacing:0.25px;word-spacing:-0.8px;-webkit-text-stroke:0">22</div><div style="left:225px;top:158px;width:372px;height:45px;background:#abc5dc"></div><div style="left:225px;top:158px;width:372px;height:1.3px;background:#111"></div><div style="left:225px;top:203px;width:372px;height:1.3px;background:#111"></div><div style="left:225px;top:231px;width:372px;height:1.3px;background:#111"></div><div style="left:225px;top:260px;width:372px;height:1.3px;background:#111"></div><div style="left:225px;top:305px;width:372px;height:1.3px;background:#111"></div><div style="left:225px;top:333px;width:372px;height:1.3px;background:#111"></div><div style="left:225px;top:362px;width:372px;height:1.3px;background:#111"></div><div style="left:225px;top:390px;width:372px;height:1.3px;background:#111"></div><div style="left:225px;top:419px;width:372px;height:1.3px;background:#111"></div><div style="left:225px;top:447px;width:372px;height:1.3px;background:#111"></div><div style="left:225px;top:158px;width:1.3px;height:290px;background:#111"></div><div style="left:367px;top:158px;width:1.3px;height:290px;background:#111"></div><div style="left:597px;top:158px;width:1.3px;height:290px;background:#111"></div><div class="t" style="left:292.00px;top:143.14px;font-size:12px;line-height:12px;color:#222;font-family:'Liberation Sans', sans-serif;letter-spacing:0.25px;word-spacing:-0.8px;-webkit-text-stroke:0">A</div><div class="t" style="left:478.00px;top:143.14px;font-size:12px;line-height:12px;color:#222;font-family:'Liberation Sans', sans-serif;letter-spacing:0.25px;word-spacing:-0.8px;-webkit-text-stroke:0">B</div><div class="t" style="left:669.16px;top:143.14px;font-size:12px;line-height:12px;color:#222;font-family:'Liberation Sans', sans-serif;letter-spacing:0.25px;word-spacing:-0.8px;-webkit-text-stroke:0">C</div><div class="t" style="left:827.16px;top:143.14px;font-size:12px;line-height:12px;color:#222;font-family:'Liberation Sans', sans-serif;letter-spacing:0.25px;word-spacing:-0.8px;-webkit-text-stroke:0">D</div><div class="t" style="left:963.00px;top:143.14px;font-size:12px;line-height:12px;color:#222;font-family:'Liberation Sans', sans-serif;letter-spacing:0.25px;word-spacing:-0.8px;-webkit-text-stroke:0">E</div><div class="t" style="left:1071.59px;top:143.14px;font-size:12px;line-height:12px;color:#222;font-family:'Liberation Sans', sans-serif;letter-spacing:0.25px;word-spacing:-0.8px;-webkit-text-stroke:0">F</div><div class="t" style="left:1178.59px;top:143.14px;font-size:12px;line-height:12px;color:#222;font-family:'Liberation Sans', sans-serif;letter-spacing:0.25px;word-spacing:-0.8px;-webkit-text-stroke:0">G</div><div class="t" style="left:1286.66px;top:143.14px;font-size:12px;line-height:12px;color:#222;font-family:'Liberation Sans', sans-serif;letter-spacing:0.25px;word-spacing:-0.8px;-webkit-text-stroke:0">H</div><div class="t" style="left:1396.84px;top:143.14px;font-size:12px;line-height:12px;color:#222;font-family:'Liberation Sans', sans-serif;letter-spacing:0.25px;word-spacing:-0.8px;-webkit-text-stroke:0">I</div><div class="t" style="left:242.4px;top:174.5px;font-size:15px;line-height:18px;height:18px;color:#111;font-family:'Liberation Mono',monospace;letter-spacing:0.1px;transform:scaleY(1.18)">Subject Code</div><div class="t" style="left:430.4px;top:174.5px;font-size:15px;line-height:18px;height:18px;color:#111;font-family:'Liberation Mono',monospace;letter-spacing:0.1px;transform:scaleY(1.18)">Subject Name</div><div class="t" style="left:278.8px;top:211.5px;font-size:15px;line-height:18px;height:18px;color:#111;font-family:'Liberation Mono',monospace;letter-spacing:0.1px;transform:scaleY(1.26)">1001</div><div class="t" style="left:430.4px;top:211.0px;font-size:15px;line-height:18px;height:18px;color:#111;font-family:'Liberation Mono',monospace;letter-spacing:0.1px;transform:scaleY(1.18)">Cash on hand</div><div class="t" style="left:278.8px;top:240.0px;font-size:15px;line-height:18px;height:18px;color:#111;font-family:'Liberation Mono',monospace;letter-spacing:0.1px;transform:scaleY(1.26)">1002</div><div class="t" style="left:416.8px;top:239.5px;font-size:15px;line-height:18px;height:18px;color:#111;font-family:'Liberation Mono',monospace;letter-spacing:0.1px;transform:scaleY(1.18)">Deposit in bank</div><div class="t" style="left:278.8px;top:277.0px;font-size:15px;line-height:18px;height:18px;color:#111;font-family:'Liberation Mono',monospace;letter-spacing:0.1px;transform:scaleY(1.26)">1012</div><div class="t" style="left:384.9px;top:276.5px;font-size:15px;line-height:18px;height:18px;color:#111;font-family:'Liberation Mono',monospace;letter-spacing:0.1px;transform:scaleY(1.18)">Other monetary capital</div><div class="t" style="left:278.8px;top:313.5px;font-size:15px;line-height:18px;height:18px;color:#111;font-family:'Liberation Mono',monospace;letter-spacing:0.1px;transform:scaleY(1.26)">1101</div><div class="t" style="left:380.4px;top:313.0px;font-size:15px;line-height:18px;height:18px;color:#111;font-family:'Liberation Mono',monospace;letter-spacing:0.1px;transform:scaleY(1.18)">Trading financial asset</div><div class="t" style="left:278.8px;top:342.0px;font-size:15px;line-height:18px;height:18px;color:#111;font-family:'Liberation Mono',monospace;letter-spacing:0.1px;transform:scaleY(1.26)">1121</div><div class="t" style="left:416.8px;top:341.5px;font-size:15px;line-height:18px;height:18px;color:#111;font-family:'Liberation Mono',monospace;letter-spacing:0.1px;transform:scaleY(1.18)">Bill receivable</div><div class="t" style="left:278.8px;top:370.5px;font-size:15px;line-height:18px;height:18px;color:#111;font-family:'Liberation Mono',monospace;letter-spacing:0.1px;transform:scaleY(1.26)">1122</div><div class="t" style="left:398.6px;top:370.0px;font-size:15px;line-height:18px;height:18px;color:#111;font-family:'Liberation Mono',monospace;letter-spacing:0.1px;transform:scaleY(1.18)">Accounts receivable</div><div class="t" style="left:278.8px;top:399.0px;font-size:15px;line-height:18px;height:18px;color:#111;font-family:'Liberation Mono',monospace;letter-spacing:0.1px;transform:scaleY(1.26)">1123</div><div class="t" style="left:412.2px;top:398.5px;font-size:15px;line-height:18px;height:18px;color:#111;font-family:'Liberation Mono',monospace;letter-spacing:0.1px;transform:scaleY(1.18)">Accounts prepaid</div><div class="t" style="left:278.8px;top:427.5px;font-size:15px;line-height:18px;height:18px;color:#111;font-family:'Liberation Mono',monospace;letter-spacing:0.1px;transform:scaleY(1.26)">1403</div><div class="t" style="left:425.9px;top:427.0px;font-size:15px;line-height:18px;height:18px;color:#111;font-family:'Liberation Mono',monospace;letter-spacing:0.1px;transform:scaleY(1.18)">Raw materials</div><div style="left:1452px;top:137px;width:17px;height:685px;background:#e2e2e2"></div><div style="left:1452px;top:137px;width:17px;height:16px;background:#fdfdfd"></div><svg style="left:1455px;top:141px" width="11" height="7"><path d="M0.8 6L5.5 1.3L10.2 6" fill="none" stroke="#333" stroke-width="1.2"/></svg><div style="left:1469px;top:0px;width:40px;height:822px;background:#e8e8e8"></div><div style="left:1473px;top:0px;width:32px;height:7px;background:#f4f4f4"></div><div style="left:1481px;top:0px;width:16px;height:1.3px;background:#3a8ee6"></div><svg style="left:1481px;top:17px;overflow:visible" width="16" height="16" viewBox="0 0 16 16"><path d="M1 15.5V1H15V5.5" fill="none" stroke="#5b5b66" stroke-width="2"/><path d="M1 2H15" stroke="#5b5b66" stroke-width="2.4"/><rect x="3.2" y="4.2" width="2.3" height="2.3" fill="#5b5b66"/><rect x="7" y="4.2" width="2.3" height="2.3" fill="#5b5b66"/><rect x="10.8" y="4.2" width="2.3" height="2.3" fill="#5b5b66"/><rect x="3.2" y="8" width="2.3" height="2.3" fill="#5b5b66"/><rect x="3.2" y="11.8" width="2.3" height="2.3" fill="#5b5b66"/><circle cx="10.6" cy="10.4" r="5.2" fill="#5b5b66" stroke="#e8e8e8" stroke-width="0.8"/><rect x="9.8" y="9.2" width="1.7" height="4.3" fill="#e8e8e8"/><circle cx="10.65" cy="7.4" r="1" fill="#e8e8e8"/></svg><svg style="left:1481px;top:49px;overflow:visible" width="16" height="16" viewBox="0 0 16 16"><rect x="1.6" y="1.6" width="12.6" height="12.6" fill="none" stroke="#5b5b66" stroke-width="2"/><circle cx="1.6" cy="1.6" r="1.5" fill="#5b5b66"/><circle cx="14.2" cy="1.6" r="1.5" fill="#5b5b66"/><circle cx="1.6" cy="14.2" r="1.5" fill="#5b5b66"/><circle cx="14.2" cy="14.2" r="1.5" fill="#5b5b66"/></svg><svg style="left:1481px;top:81px;overflow:visible" width="16" height="16" viewBox="0 0 16 16"><rect x="1" y="3" width="14" height="10.8" rx="0.8" fill="none" stroke="#5b5b66" stroke-width="2"/><path d="M8.2 6.2H13L10.6 10.2Z" fill="#5b5b66"/></svg><svg style="left:1481px;top:113px;overflow:visible" width="16" height="16" viewBox="0 0 16 16"><rect x="4.4" y="2" width="12.5" height="3.8" rx="1.9" fill="none" stroke="#5b5b66" stroke-width="1.9"/><rect x="4.4" y="9" width="9.4" height="3.8" rx="1.9" fill="none" stroke="#5b5b66" stroke-width="1.9"/><path d="M1.8 4.3H0.5V11.7H1.8" fill="none" stroke="#5b5b66" stroke-width="1.1"/></svg><svg style="left:1481px;top:145px;overflow:visible" width="16" height="16" viewBox="0 0 16 16"><g transform="rotate(45 8 8)"><rect x="-0.2" y="5.2" width="9.6" height="5.6" rx="2.8" fill="none" stroke="#5b5b66" stroke-width="2"/><rect x="6.6" y="5.2" width="9.6" height="5.6" rx="2.8" fill="none" stroke="#5b5b66" stroke-width="2"/></g></svg><svg style="left:1481px;top:177px;overflow:visible" width="16" height="16" viewBox="0 0 16 16"><path d="M2.2 5.5V0.8H10.5L15.5 5.8V16.2H2.2V12.5" fill="none" stroke="#5b5b66" stroke-width="1.9"/><path d="M10.5 0.8V5.8H15.5Z" fill="#5b5b66"/><path d="M-1 9.6H8.5" stroke="#5b5b66" stroke-width="2"/><path d="M6 6.4L9.6 9.6L6 12.8" fill="none" stroke="#5b5b66" stroke-width="2"/></svg><div style="left:1509px;top:0px;width:171px;height:822px;background:#f4f4f4"></div><div class="t" style="left:1519.00px;top:-6.66px;font-size:12px;line-height:12px;color:#000;font-family:'Liberation Sans', sans-serif;letter-spacing:0.25px;word-spacing:-0.8px;">Cell</div><div style="left:1611px;top:-12px;width:80px;height:19.7px;background:#fff;border:1px solid #d6d6d6;box-sizing:border-box"></div><div class="t" style="left:1615.00px;top:-8.66px;font-size:12px;line-height:12px;color:#000;font-family:'Liberation Sans', sans-serif;letter-spacing:0.25px;word-spacing:-0.8px;font-weight:bold">B10</div><div class="t" style="left:1519.00px;top:23.84px;font-size:12px;line-height:12px;color:#000;font-family:'Liberation Sans', sans-serif;letter-spacing:0.25px;word-spacing:-0.8px;">Insert Element</div><div style="left:1611px;top:18.2px;width:80px;height:19.3px;background:#fff;border:1px solid #d6d6d6;box-sizing:border-box"></div><div class="t" style="left:1615.20px;top:21.84px;font-size:12px;line-height:12px;color:#000;font-family:'Liberation Sans', sans-serif;letter-spacing:0.25px;word-spacing:-0.8px;">Insert Text(Text)</div><div class="t" style="left:1519.00px;top:53.04px;font-size:12px;line-height:12px;color:#000;font-family:'Liberation Sans', sans-serif;letter-spacing:0.25px;word-spacing:-0.8px;">Format</div><div style="left:1578px;top:49.2px;width:110px;height:19.3px;background:#fff;border:1px solid #d6d6d6;box-sizing:border-box"></div><div class="t" style="left:1582.80px;top:53.04px;font-size:12px;line-height:12px;color:#000;font-family:'Liberation Sans', sans-serif;letter-spacing:0.25px;word-spacing:-0.8px;">General</div><div style="left:1519px;top:79px;width:170px;height:27.6px;background:#fff;border:1px solid #d6d6d6;box-sizing:border-box"></div>
<div style="left:491px;top:112px;width:716px;height:598px;background:#f4f4f4;box-shadow:0 3px 10px rgba(0,0,0,0.3), 0 0 2px rgba(0,0,0,0.25)"></div><div style="left:491px;top:112px;width:716px;height:37px;background:#fff"></div><div style="left:491px;top:112px;width:716px;height:598px;border:1px solid #8c8c8c;border-right-color:#a0a0a0;border-bottom-color:#a0a0a0;box-sizing:border-box"></div><div class="t" style="left:495.60px;top:122.76px;font-size:18px;line-height:18px;color:#a3a3a3;font-family:'Liberation Sans', sans-serif;letter-spacing:0px;word-spacing:0px;-webkit-text-stroke:0">Data Entry Attribute</div><svg style="left:1173px;top:122.5px" width="17" height="17"><path d="M0.8 0.8L16 16M16 0.8L0.8 16" stroke="#555" stroke-width="1.1"/></svg><div style="left:498px;top:155px;width:53px;height:25.5px;background:#f4f4f4;border:1px solid #8ea2bb;border-bottom:none;box-sizing:border-box;border-radius:2px 2px 0 0"></div><div style="left:498px;top:155px;width:53px;height:2.4px;background:#3c8fe8;border-radius:2px 2px 0 0"></div><div class="t" style="left:506.00px;top:159.84px;font-size:12px;line-height:12px;color:#000;font-family:'Liberation Sans', sans-serif;letter-spacing:0.25px;word-spacing:-0.8px;">Submit</div><div style="left:552px;top:155px;width:87px;height:25.5px;background:#d8d8da;border:1px solid #8ea2bb;border-bottom:none;box-sizing:border-box;border-radius:2px 2px 0 0"></div><div class="t" style="left:558.83px;top:162.04px;font-size:12px;line-height:12px;color:#000;font-family:'Liberation Sans', sans-serif;letter-spacing:0.25px;word-spacing:-0.8px;">Validate Data</div><div style="left:640px;top:155px;width:133px;height:25.5px;background:#d8d8da;border:1px solid #8ea2bb;border-bottom:none;box-sizing:border-box;border-radius:2px 2px 0 0"></div><div class="t" style="left:647.29px;top:162.04px;font-size:12px;line-height:12px;color:#000;font-family:'Liberation Sans', sans-serif;letter-spacing:0.1px;word-spacing:-1px;">Set Entry Shortcut Key</div><div style="left:496px;top:180px;width:705px;height:499px;background:#f4f4f4;border:1px solid #8ea2bb;box-shadow:inset 1px 1px 0 #b4c0cf, inset -1px -1px 0 #b4c0cf;box-sizing:border-box"></div><div style="left:498.5px;top:206px;width:178.5px;height:471px;background:#fdfdfd"></div><div style="left:676.5px;top:182px;width:1px;height:495px;background:#d8d8d8"></div><svg style="left:678.5px;top:185px" width="5" height="22"><path d="M4 0.5V7L0.5 3.75Z" fill="#555"/><path d="M0.5 12.5V19L4 15.75Z" fill="#555"/></svg><div style="left:683px;top:182px;width:1.2px;height:495px;background:#a8a8a8"></div><svg style="left:505px;top:187px" width="24" height="15"><path d="M7.5 0.5V14.5M0.5 7.5H14.5" stroke="#222" stroke-width="1.8"/><path d="M17 7H22.5L19.75 10.5Z" fill="#888"/></svg><svg style="left:540.5px;top:187.5px" width="13" height="13"><path d="M1 1L12 12M12 1L1 12" stroke="#e07b27" stroke-width="2.2"/></svg><svg style="left:564.5px;top:186px" width="17" height="16"><path d="M0.6 0.6H6L8 2.6V11H0.6Z" fill="#fbf7d6" stroke="#333" stroke-width="1.1"/><path d="M6 4.6H11.5L15.6 8.6V15.4H6Z" fill="#fbf5d0" stroke="#444" stroke-width="1"/><path d="M11.5 4.6V8.6H15.6" fill="none" stroke="#444" stroke-width="0.8"/></svg><svg style="left:593.5px;top:187.5px" width="11" height="14"><path d="M5.5 0L11 6H7V14H4V6H0Z" fill="#222"/></svg><svg style="left:619px;top:187.5px" width="11" height="14"><path d="M5.5 14L11 8H7V0H4V8H0Z" fill="#222"/></svg><svg style="left:642px;top:186.5px" width="18" height="15"><circle cx="2" cy="2" r="1.5" fill="none" stroke="#333" stroke-width="1"/><circle cx="2" cy="7.5" r="1.5" fill="none" stroke="#333" stroke-width="1"/><circle cx="2" cy="13" r="1.5" fill="none" stroke="#333" stroke-width="1"/><path d="M11.5 15L17 9H13.5V0H9.5V9H6Z" fill="#222"/></svg><div style="left:516px;top:207px;width:159.5px;height:19.7px;background:#4599f0"></div><svg style="left:500px;top:211px" width="15" height="13"><rect x="2.5" y="2.5" width="11.5" height="9.5" fill="#fff" stroke="#1a1a5a" stroke-width="1"/><rect x="0.5" y="0.5" width="11.5" height="9.5" fill="#dde8f8" stroke="#2a4a9a" stroke-width="1"/><rect x="1" y="1" width="10.5" height="2" fill="#3f78d0"/><path d="M2.5 5H5M2.5 7.5H4" stroke="#333" stroke-width="0.8"/></svg><div class="t" style="left:517.00px;top:211.34px;font-size:12px;line-height:12px;color:#fff;font-family:'Liberation Sans', sans-serif;letter-spacing:0px;word-spacing:0px;-webkit-text-stroke:0">Built-in SQL1</div><div style="left:686px;top:191px;width:4px;height:1px;background:#dedede"></div><div style="left:786.15625px;top:191px;width:409.84375px;height:1px;background:#dedede"></div><div class="t" style="left:692.30px;top:184.84px;font-size:12px;line-height:12px;color:#000;font-family:'Liberation Sans', sans-serif;letter-spacing:0.25px;word-spacing:-0.8px;">Submission Type</div><div class="t" style="left:699.20px;top:205.84px;font-size:12px;line-height:12px;color:#000;font-family:'Liberation Sans', sans-serif;letter-spacing:0.25px;word-spacing:-0.8px;">Submission Type Selection:</div><div style="left:862px;top:202.4px;width:140px;height:19.3px;background:#fff;border:1px solid #d4d4d4;box-sizing:border-box"></div><div style="left:982px;top:202.4px;width:20px;height:19.3px;background:#d9d9dc"></div><div class="t" style="left:866.00px;top:205.94px;font-size:12px;line-height:12px;color:#000;font-family:'Liberation Sans', sans-serif;letter-spacing:0.25px;word-spacing:-0.8px;">Smart Submission</div><svg style="left:987.0px;top:209.4px" width="10" height="6"><path d="M0.5 0.5L5 5L9.5 0.5" fill="none" stroke="#333" stroke-width="1"/></svg><div style="left:686px;top:235px;width:4px;height:1px;background:#dedede"></div><div style="left:723.6875px;top:235px;width:472.3125px;height:1px;background:#dedede"></div><div class="t" style="left:692.30px;top:228.84px;font-size:12px;line-height:12px;color:#000;font-family:'Liberation Sans', sans-serif;letter-spacing:0.25px;word-spacing:-0.8px;">Table</div><div class="t" style="left:689.30px;top:249.64px;font-size:12px;line-height:12px;color:#000;font-family:'Liberation Sans', sans-serif;letter-spacing:0.25px;word-spacing:-0.8px;">Database:</div><div style="left:752.4px;top:246.5px;width:96px;height:19.3px;background:#fff;border:1px solid #d4d4d4;box-sizing:border-box"></div><div style="left:828.4px;top:246.5px;width:20.0px;height:19.3px;background:#d9d9dc"></div><div class="t" style="left:756.40px;top:250.04px;font-size:12px;line-height:12px;color:#000;font-family:'Liberation Sans', sans-serif;letter-spacing:0.25px;word-spacing:-0.8px;">FRDemo</div><svg style="left:833.4px;top:253.5px" width="10" height="6"><path d="M0.5 0.5L5 5L9.5 0.5" fill="none" stroke="#333" stroke-width="1"/></svg><div class="t" style="left:854.30px;top:249.64px;font-size:12px;line-height:12px;color:#000;font-family:'Liberation Sans', sans-serif;letter-spacing:0.25px;word-spacing:-0.8px;">Mode:</div><div style="left:893px;top:246.3px;width:97px;height:19.5px;background:#fff;border:1px solid #d4d4d4;box-sizing:border-box"></div><div style="left:970.2px;top:246.3px;width:19.799999999999955px;height:19.5px;background:#d9d9dc"></div><svg style="left:975.1px;top:253.3px" width="10" height="6"><path d="M0.5 0.5L5 5L9.5 0.5" fill="none" stroke="#333" stroke-width="1"/></svg><div class="t" style="left:996.00px;top:249.64px;font-size:12px;line-height:12px;color:#000;font-family:'Liberation Sans', sans-serif;letter-spacing:0.25px;word-spacing:-0.8px;">Table:</div><div style="left:1036.2px;top:246.4px;width:96.2px;height:19.3px;background:#fff;border:1px solid #d4d4d4;box-sizing:border-box"></div><div style="left:1039px;top:247px;width:73.5px;height:18px;overflow:hidden"><div class="t" style="left:-17.62px;top:2.94px;font-size:12px;line-height:12px;color:#000;font-family:'Liberation Sans', sans-serif;letter-spacing:0.25px;word-spacing:-0.8px;">SubjectBalance</div></div><div style="left:1113px;top:247px;width:1px;height:18px;background:#d4d4d4"></div><svg style="left:1117.5px;top:253.5px" width="10" height="6"><path d="M0.5 0.5L5 5L9.5 0.5" fill="none" stroke="#333" stroke-width="1"/></svg><div style="left:1139.3px;top:246.4px;width:23.2px;height:19.3px;background:#fff;border:1px solid #d4d4d4;box-sizing:border-box"></div><svg style="left:1143.5px;top:248.5px" width="15" height="15" viewBox="0 0 15 15"><path d="M12.3 5.2A5.6 5.6 0 1 0 13 9" fill="none" stroke="#333" stroke-width="1.7"/><path d="M9.2 0.8L13.6 1.6L12.4 5.9Z" fill="#333"/></svg><div style="left:1169.2px;top:246.4px;width:23.3px;height:19.3px;background:#fff;border:1px solid #d4d4d4;box-sizing:border-box"></div><svg style="left:1174px;top:248.5px" width="14" height="15" viewBox="0 0 14 15"><path d="M5 14H0.7V0.7H7L11 4.7V7" fill="none" stroke="#333" stroke-width="1.2"/><path d="M6.8 0.7V4.9H11" fill="none" stroke="#333" stroke-width="1"/><circle cx="8.3" cy="10" r="2.7" fill="none" stroke="#333" stroke-width="1.2"/><path d="M10.3 12L12.8 14.3" stroke="#333" stroke-width="1.4"/></svg><div style="left:686px;top:279px;width:4px;height:1px;background:#dedede"></div><div style="left:724.796875px;top:279px;width:471.203125px;height:1px;background:#dedede"></div><div class="t" style="left:692.30px;top:272.84px;font-size:12px;line-height:12px;color:#000;font-family:'Liberation Sans', sans-serif;letter-spacing:0.25px;word-spacing:-0.8px;">Value</div><div style="left:689.3px;top:290.5px;width:358.5px;height:271.5px;background:#f4f4f4;border:1px solid #c9c9c9;box-sizing:border-box"></div><div style="left:690.3px;top:291.5px;width:356.5px;height:21px;background:#e3e3e3"></div><div style="left:738.3px;top:294px;width:1.2px;height:17px;background:#c4c4c4"></div><div style="left:891.8px;top:294px;width:1.2px;height:17px;background:#c4c4c4"></div><div style="left:1044.5px;top:294px;width:1.2px;height:17px;background:#c4c4c4"></div><div class="t" style="left:703.41px;top:296.84px;font-size:12px;line-height:12px;color:#000;font-family:'Liberation Sans', sans-serif;letter-spacing:0.25px;word-spacing:-0.8px;">Key</div><div class="t" style="left:794.20px;top:296.84px;font-size:12px;line-height:12px;color:#000;font-family:'Liberation Sans', sans-serif;letter-spacing:0.25px;word-spacing:-0.8px;">Column</div><div class="t" style="left:953.10px;top:296.84px;font-size:12px;line-height:12px;color:#000;font-family:'Liberation Sans', sans-serif;letter-spacing:0.25px;word-spacing:-0.8px;">Value</div><div style="left:690.3px;top:312.5px;width:356.5px;height:2px;background:#ededed"></div><div style="left:690.3px;top:314.7px;width:356.5px;height:19.80000000000001px;background:#fdfdfd"></div><div style="left:690.3px;top:333.5px;width:356.5px;height:1.2px;background:#d6d6d6"></div><div style="left:739px;top:314.7px;width:1.3px;height:19.80000000000001px;background:#d6d6d6"></div><div style="left:892.5px;top:314.7px;width:1.3px;height:19.80000000000001px;background:#d6d6d6"></div><div style="left:1045.3px;top:314.7px;width:1.3px;height:19.80000000000001px;background:#d6d6d6"></div><svg style="left:708px;top:318.0px" width="13" height="13"><defs><linearGradient id="cbg" x1="0" y1="0" x2="1" y2="1"><stop offset="0" stop-color="#e2e2e2"/><stop offset="1" stop-color="#fbfbfb"/></linearGradient></defs><rect x="0.6" y="0.6" width="11.8" height="11.8" fill="url(#cbg)" stroke="#6f6f6f" stroke-width="1.1"/><path d="M2.8 6.3L5.2 9L10.2 3.8" fill="none" stroke="#1e6a1e" stroke-width="2.3"/></svg><div class="t" style="left:741.10px;top:317.74px;font-size:12px;line-height:12px;color:#000;font-family:'Liberation Sans', sans-serif;letter-spacing:0.25px;word-spacing:-0.8px;">Subject code</div><div style="left:690.3px;top:334.5px;width:356.5px;height:20.0px;background:#fdfdfd"></div><div style="left:690.3px;top:353.5px;width:356.5px;height:1.2px;background:#d6d6d6"></div><div style="left:739px;top:334.5px;width:1.3px;height:20.0px;background:#d6d6d6"></div><div style="left:892.5px;top:334.5px;width:1.3px;height:20.0px;background:#d6d6d6"></div><div style="left:1045.3px;top:334.5px;width:1.3px;height:20.0px;background:#d6d6d6"></div><svg style="left:708px;top:337.8px" width="13" height="13"><defs><linearGradient id="cbg" x1="0" y1="0" x2="1" y2="1"><stop offset="0" stop-color="#e2e2e2"/><stop offset="1" stop-color="#fbfbfb"/></linearGradient></defs><rect x="0.6" y="0.6" width="11.8" height="11.8" fill="url(#cbg)" stroke="#6f6f6f" stroke-width="1.1"/><path d="M2.8 6.3L5.2 9L10.2 3.8" fill="none" stroke="#1e6a1e" stroke-width="2.3"/></svg><div class="t" style="left:741.10px;top:337.54px;font-size:12px;line-height:12px;color:#000;font-family:'Liberation Sans', sans-serif;letter-spacing:0.25px;word-spacing:-0.8px;">Accounting subject</div><div style="left:690.3px;top:354.5px;width:356.5px;height:20.0px;background:#fdfdfd"></div><div style="left:690.3px;top:373.5px;width:356.5px;height:1.2px;background:#d6d6d6"></div><div style="left:739px;top:354.5px;width:1.3px;height:20.0px;background:#d6d6d6"></div><div style="left:892.5px;top:354.5px;width:1.3px;height:20.0px;background:#d6d6d6"></div><div style="left:1045.3px;top:354.5px;width:1.3px;height:20.0px;background:#d6d6d6"></div><svg style="left:708px;top:357.8px" width="13" height="13"><defs><linearGradient id="cbg" x1="0" y1="0" x2="1" y2="1"><stop offset="0" stop-color="#e2e2e2"/><stop offset="1" stop-color="#fbfbfb"/></linearGradient></defs><rect x="0.6" y="0.6" width="11.8" height="11.8" fill="url(#cbg)" stroke="#6f6f6f" stroke-width="1.1"/><path d="M2.8 6.3L5.2 9L10.2 3.8" fill="none" stroke="#1e6a1e" stroke-width="2.3"/></svg><div class="t" style="left:741.10px;top:357.54px;font-size:12px;line-height:12px;color:#000;font-family:'Liberation Sans', sans-serif;letter-spacing:0.25px;word-spacing:-0.8px;">Opening balance</div><div style="left:690.3px;top:374.5px;width:356.5px;height:19.80000000000001px;background:#c6dae9"></div><div style="left:690.3px;top:393.3px;width:356.5px;height:1.2px;background:#d6d6d6"></div><div style="left:739px;top:374.5px;width:1.3px;height:19.80000000000001px;background:#d6d6d6"></div><div style="left:892.5px;top:374.5px;width:1.3px;height:19.80000000000001px;background:#d6d6d6"></div><div style="left:1045.3px;top:374.5px;width:1.3px;height:19.80000000000001px;background:#d6d6d6"></div><svg style="left:708px;top:377.8px" width="13" height="13"><defs><linearGradient id="cbg" x1="0" y1="0" x2="1" y2="1"><stop offset="0" stop-color="#e2e2e2"/><stop offset="1" stop-color="#fbfbfb"/></linearGradient></defs><rect x="0.6" y="0.6" width="11.8" height="11.8" fill="url(#cbg)" stroke="#6f6f6f" stroke-width="1.1"/><path d="M2.8 6.3L5.2 9L10.2 3.8" fill="none" stroke="#1e6a1e" stroke-width="2.3"/></svg><div class="t" style="left:741.10px;top:377.54px;font-size:12px;line-height:12px;color:#000;font-family:'Liberation Sans', sans-serif;letter-spacing:0.25px;word-spacing:-0.8px;">Ending balance</div><div style="left:1048.8px;top:290.8px;width:143.7px;height:18.8px;background:#fff;border:1px solid #dcdcdc;box-sizing:border-box"></div><div class="t" style="left:1086.87px;top:293.64px;font-size:12px;line-height:12px;color:#000;font-family:'Liberation Sans', sans-serif;letter-spacing:0.25px;word-spacing:-0.8px;">Smart Add Field</div><div style="left:1048.8px;top:314.90000000000003px;width:143.7px;height:18.8px;background:#fff;border:1px solid #dcdcdc;box-sizing:border-box"></div><div class="t" style="left:1104.56px;top:317.74px;font-size:12px;line-height:12px;color:#000;font-family:'Liberation Sans', sans-serif;letter-spacing:0.25px;word-spacing:-0.8px;">Add Field</div><div style="left:1048.8px;top:339.0px;width:143.7px;height:18.8px;background:#fff;border:1px solid #dcdcdc;box-sizing:border-box"></div><div class="t" style="left:1089.66px;top:341.84px;font-size:12px;line-height:12px;color:#000;font-family:'Liberation Sans', sans-serif;letter-spacing:0.25px;word-spacing:-0.8px;">Smart Add Cell</div><div style="left:1048.8px;top:363.1px;width:143.7px;height:18.8px;background:#fff;border:1px solid #dcdcdc;box-sizing:border-box"></div><div class="t" style="left:1070.97px;top:365.94px;font-size:12px;line-height:12px;color:#000;font-family:'Liberation Sans', sans-serif;letter-spacing:0.25px;word-spacing:-0.8px;">Smart Add Cell Group</div><div style="left:1048.8px;top:387.20000000000005px;width:143.7px;height:18.8px;background:#fff;border:1px solid #dcdcdc;box-sizing:border-box"></div><div class="t" style="left:1079.50px;top:390.04px;font-size:12px;line-height:12px;color:#000;font-family:'Liberation Sans', sans-serif;letter-spacing:0.25px;word-spacing:-0.8px;">Batch Modify Cells</div><div style="left:1048.8px;top:411.3px;width:143.7px;height:18.8px;background:#fff;border:1px solid #dcdcdc;box-sizing:border-box"></div><div class="t" style="left:1092.51px;top:414.14px;font-size:12px;line-height:12px;color:#000;font-family:'Liberation Sans', sans-serif;letter-spacing:0.25px;word-spacing:-0.8px;">Remove Field</div><div style="left:1052px;top:438px;width:13px;height:13px;background:#fff;border:1px solid #8a8a8a;box-sizing:border-box"></div><div style="left:1060px;top:436px;width:133.5px;height:16px;overflow:hidden"><div class="t" style="left:9.00px;top:1.84px;font-size:12px;line-height:12px;color:#000;font-family:'Liberation Sans', sans-serif;letter-spacing:0.25px;word-spacing:-0.8px;">No Modification, No Update</div></div><div style="left:686px;top:576px;width:4px;height:1px;background:#dedede"></div><div style="left:811.0625px;top:576px;width:384.9375px;height:1px;background:#dedede"></div><div class="t" style="left:692.30px;top:569.84px;font-size:12px;line-height:12px;color:#000;font-family:'Liberation Sans', sans-serif;letter-spacing:0.25px;word-spacing:-0.8px;">Submission Condition</div><div style="left:689.2px;top:587px;width:394px;height:55.7px;background:#e0e0e2"></div><div style="left:1083.7px;top:587.6px;width:109px;height:19.1px;background:#fff;border:1px solid #dcdcdc;box-sizing:border-box"></div><div class="t" style="left:1092.99px;top:590.74px;font-size:12px;line-height:12px;color:#000;font-family:'Liberation Sans', sans-serif;letter-spacing:0.25px;word-spacing:-0.8px;">Set Submissio...</div><div style="left:689.2px;top:652.3px;width:140.6px;height:19.5px;background:#fff;border:1px solid #dcdcdc;box-sizing:border-box"></div><div class="t" style="left:699.25px;top:655.84px;font-size:12px;line-height:12px;color:#000;font-family:'Liberation Sans', sans-serif;letter-spacing:0.25px;word-spacing:-0.8px;">Set Submission Event</div><div style="left:1086.3px;top:685.6px;width:36.4px;height:19.1px;background:#fff;border:1px solid #dcdcdc;box-sizing:border-box"></div><div class="t" style="left:1095.71px;top:688.84px;font-size:12px;line-height:12px;color:#000;font-family:'Liberation Sans', sans-serif;letter-spacing:0.25px;word-spacing:-0.8px;"><u>O</u>K</div><div style="left:1133.4px;top:685.6px;width:58.4px;height:19.1px;background:#fff;border:1px solid #dcdcdc;box-sizing:border-box"></div><div class="t" style="left:1143.30px;top:688.84px;font-size:12px;line-height:12px;color:#000;font-family:'Liberation Sans', sans-serif;letter-spacing:0.25px;word-spacing:-0.8px;"><u>C</u>ancel</div>
</body></html>
